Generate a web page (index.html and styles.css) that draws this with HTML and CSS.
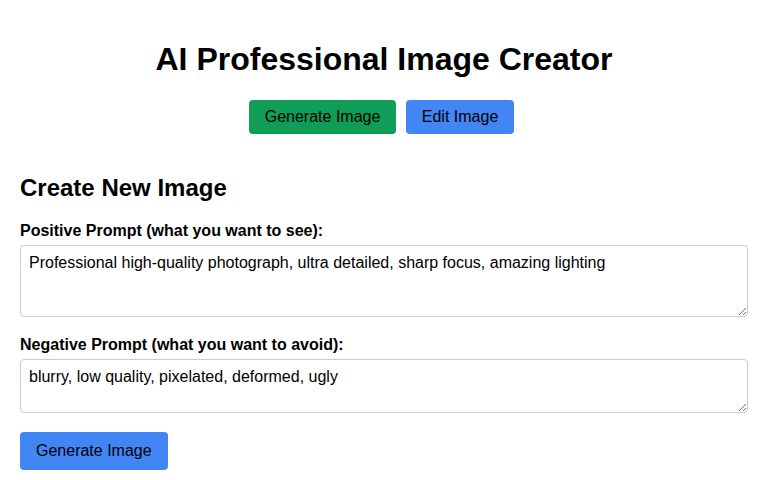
FILE: index.html
```html
<!DOCTYPE html>
<html>
<head>
<meta charset="utf-8">
<link rel="stylesheet" href="styles.css">
</head>
<body>
<h1 class="title">AI Professional Image Creator</h1>
<div class="tabs">
  <button class="btn btn-green tab">Generate Image</button>
  <button class="btn btn-blue tab">Edit Image</button>
</div>
<h2 class="section-title">Create New Image</h2>
<div class="group">
  <label class="label">Positive Prompt (what you want to see):</label>
  <textarea class="field field-tall">Professional high-quality photograph, ultra detailed, sharp focus, amazing lighting</textarea>
</div>
<div class="group">
  <label class="label">Negative Prompt (what you want to avoid):</label>
  <textarea class="field field-short">blurry, low quality, pixelated, deformed, ugly</textarea>
</div>
<button class="btn btn-blue btn-submit">Generate Image</button>
</body>
</html>
```
FILE: styles.css
```css
body {
  margin: 0;
  padding: 20px;
  font-family: "Liberation Sans", Arial, sans-serif;
  background: #fff;
  color: #000;
}
.title {
  text-align: center;
  font-size: 32px;
  margin: 0.67em 0;
}
.tabs {
  text-align: center;
  margin-bottom: 40px;
}
.btn {
  font-family: "Liberation Sans", Arial, sans-serif;
  font-size: 16px;
  color: #000;
  border: none;
  border-radius: 4px;
  padding: 8px 16px;
  line-height: 18px;
  cursor: pointer;
}
.tab {
  display: inline-block;
  margin: 0 5px 0 0;
  vertical-align: top;
}
.btn-green { background: #0f9d58; }
.btn-blue { background: #4285f4; }
.section-title {
  font-size: 24px;
  margin: 20px 0;
}
.group {
  margin-bottom: 19px;
}
.label {
  display: block;
  font-weight: bold;
  font-size: 16px;
  margin-bottom: 5px;
}
.field {
  display: block;
  width: 100%;
  box-sizing: border-box;
  padding: 8px;
  border: 1px solid #ccc;
  border-radius: 4px;
  font-family: "Liberation Sans", Arial, sans-serif;
  font-size: 16px;
  color: #000;
  margin: 0;
}
.field-tall { height: 72px; }
.field-short { height: 54px; }
.btn-submit {
  display: block;
  padding: 10px 16px;
}
```
